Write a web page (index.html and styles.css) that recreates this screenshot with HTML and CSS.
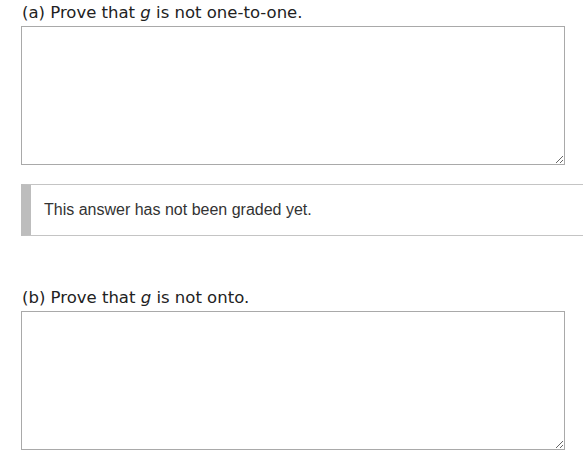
FILE: index.html
```html
<!DOCTYPE html>
<html lang="en">
<head>
    <meta charset="UTF-8">
    <title>Question</title>
    <link rel="stylesheet" href="styles.css">
</head>
<body>
    <div class="question">
        <div class="part">
            <div class="prompt">(a) Prove that <i>g</i> is not one-to-one.</div>
            <textarea class="answer"></textarea>
        </div>
        <div class="feedback">
            <div class="feedback-text">This answer has not been graded yet.</div>
        </div>
        <div class="part part-b">
            <div class="prompt">(b) Prove that <i>g</i> is not onto.</div>
            <textarea class="answer"></textarea>
        </div>
    </div>
</body>
</html>
```

FILE: styles.css
```css
html, body {
    margin: 0;
    padding: 0;
    background: #FFFFFF;
}
.question {
    padding: 3px 0 0 21px;
}
.prompt {
    font-family: "DejaVu Sans", Verdana, sans-serif;
    font-size: 16.5px;
    line-height: 20px;
    color: #222222;
    margin: 0 0 3px 1px;
}
.answer {
    display: block;
    box-sizing: border-box;
    width: 544px;
    height: 139px;
    margin: 0;
    padding: 2px;
    border: 1px solid #A9A9A9;
    border-radius: 0;
    background: #FFFFFF;
}
.feedback {
    margin-top: 19px;
    height: 52px;
    box-sizing: border-box;
    border-top: 1px solid #C4C4C4;
    border-bottom: 1px solid #C4C4C4;
    border-left: 10px solid #BDBDBD;
    display: flex;
    align-items: center;
}
.feedback-text {
    font-family: "Liberation Sans", Arial, sans-serif;
    font-size: 16px;
    color: #333333;
    padding-left: 13px;
}
.part-b {
    margin-top: 52px;
}
```
